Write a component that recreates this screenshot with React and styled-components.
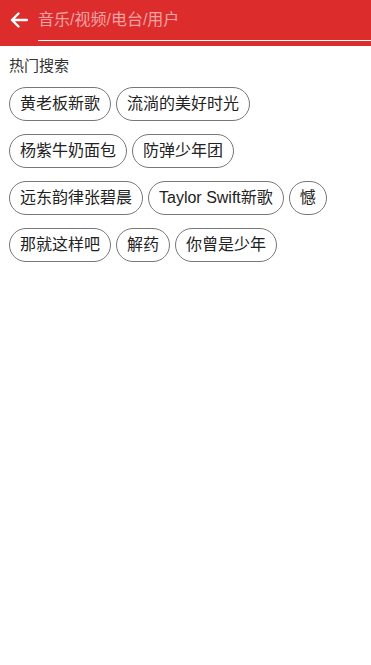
import React from "react";
import styled, { createGlobalStyle } from "styled-components";

const GlobalStyle = createGlobalStyle`
  body {
    margin: 0;
    background: #fff;
    font-family: "Liberation Sans", "Noto Sans CJK SC", sans-serif;
  }
`;

const Header = styled.div`
  height: 46px;
  background: #dd2c2c;
  display: flex;
  align-items: stretch;
  padding-left: 8px;
  box-sizing: border-box;
`;

const BackButton = styled.button`
  border: none;
  background: none;
  padding: 0;
  width: 22px;
  margin-right: 8px;
  display: flex;
  align-items: center;
  justify-content: center;
  height: 40px;
  cursor: pointer;
`;

const SearchInput = styled.input`
  flex: 1;
  height: 40px;
  border: none;
  border-bottom: 1px solid #fff;
  background: transparent;
  color: #fff;
  font-size: 16px;
  font-family: inherit;
  padding: 0;
  outline: none;
  &::placeholder {
    color: #f3a3a3;
  }
`;

const Section = styled.div`
  padding: 10px 9px;
`;

const Title = styled.div`
  font-size: 15px;
  color: #333;
  line-height: 20px;
  margin-bottom: 11px;
`;

const TagList = styled.div`
  display: flex;
  flex-wrap: wrap;
  column-gap: 5px;
  row-gap: 13px;
`;

const Tag = styled.span`
  display: inline-block;
  border: 1px solid #777;
  border-radius: 17px;
  padding: 6px 10px;
  font-size: 16px;
  line-height: 20px;
  color: #222;
`;

const hot = [
  "黄老板新歌",
  "流淌的美好时光",
  "杨紫牛奶面包",
  "防弹少年团",
  "远东韵律张碧晨",
  "Taylor Swift新歌",
  "憾",
  "那就这样吧",
  "解药",
  "你曾是少年",
];

export default function App() {
  return (
    <>
      <GlobalStyle />
      <Header>
        <BackButton>
          <svg width="18" height="16" viewBox="0 0 18 16">
            <path
              d="M17 8H2M8.5 1.5L2 8l6.5 6.5"
              stroke="#fff"
              strokeWidth="2.4"
              fill="none"
              strokeLinecap="round"
              strokeLinejoin="round"
            />
          </svg>
        </BackButton>
        <SearchInput placeholder="音乐/视频/电台/用户" />
      </Header>
      <Section>
        <Title>热门搜索</Title>
        <TagList>
          {hot.map((t) => (
            <Tag key={t}>{t}</Tag>
          ))}
        </TagList>
      </Section>
    </>
  );
}
